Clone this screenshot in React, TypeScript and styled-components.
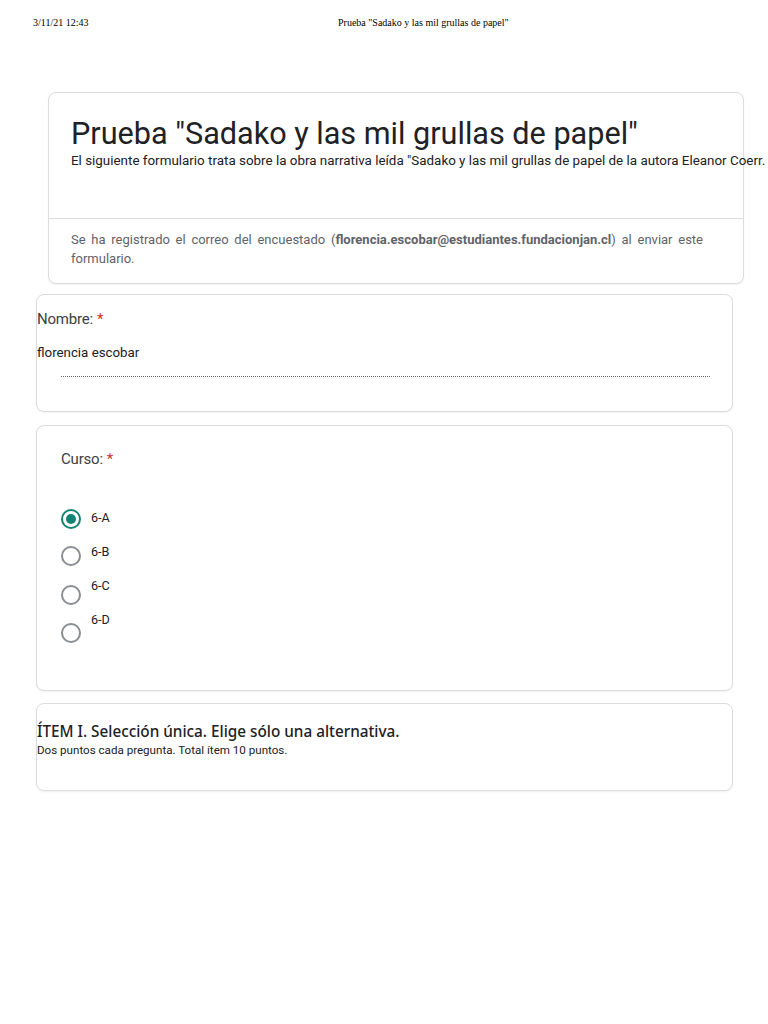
import styled, { createGlobalStyle } from "styled-components";

const GlobalStyle = createGlobalStyle`
  body {
    margin: 0;
    background: #fff;
    font-family: Roboto, "Liberation Sans", Arial, sans-serif;
    color: #202124;
  }
`;

const Page = styled.div`
  width: 768px;
  height: 1024px;
  overflow: hidden;
`;

const PrintHeader = styled.div`
  display: flex;
  align-items: baseline;
  padding: 17px 0 0 33px;
  height: 14px;
  font-family: "Liberation Serif", "Times New Roman", serif;
  font-size: 10px;
  color: #000;
`;

const PrintDate = styled.span`
  width: 305px;
`;

const PrintTitle = styled.span``;

const Column = styled.div`
  display: flex;
  flex-direction: column;
  padding-top: 61px;
`;

const Card = styled.div<{ $left: number; $width: number; $gap: number }>`
  margin-left: ${(p) => p.$left}px;
  margin-top: ${(p) => p.$gap}px;
  width: ${(p) => p.$width}px;
  box-sizing: border-box;
  background: #fff;
  border: 1px solid #dadce0;
  border-radius: 8px;
  box-shadow: 0 1px 2px rgba(0, 0, 0, 0.06);
`;

const HeaderTop = styled.div`
  padding: 22px 0 0 22px;
  height: 126px;
  box-sizing: border-box;
  border-bottom: 1px solid #dadce0;
`;

const FormTitle = styled.h1`
  margin: 0;
  font-size: 30.6px;
  font-weight: 400;
  line-height: 37px;
  color: #202124;
  white-space: nowrap;
`;

const FormDescription = styled.p`
  margin: 0;
  font-size: 13.4px;
  line-height: 17px;
  color: #202124;
  white-space: nowrap;
`;

const HeaderBottom = styled.div`
  padding: 11px 40px 15px 22px;
  font-size: 13px;
  line-height: 19px;
  color: #5f6368;
  text-align: justify;
`;

const Strong = styled.strong`
  font-weight: 700;
`;

const QuestionLabel = styled.div`
  font-size: 15px;
  line-height: 20px;
  color: #3c4043;
  letter-spacing: -0.2px;
`;

const Required = styled.span`
  color: #d93025;
  margin-left: 4px;
`;

const NameCard = styled.div`
  padding: 14px 0 0;
  height: 116px;
  box-sizing: border-box;
`;

const Answer = styled.div`
  margin-top: 16px;
  font-size: 13.3px;
  line-height: 16px;
  color: #202124;
`;

const DottedLine = styled.div`
  margin: 15px 0 0 24px;
  width: 649px;
  border-bottom: 1px dotted #5f6368;
`;

const CourseCard = styled.div`
  padding: 23px 24px 0;
  height: 264px;
  box-sizing: border-box;
`;

const Options = styled.div`
  display: flex;
  flex-direction: column;
  margin-top: 40px;
  gap: 14px;
`;

const Option = styled.div`
  display: flex;
  align-items: flex-start;
  height: 20px;
  gap: 10px;
`;

const Radio = styled.span<{ $checked?: boolean; $drop: number }>`
  position: relative;
  top: ${(p) => p.$drop}px;
  flex: none;
  width: 20px;
  height: 20px;
  box-sizing: border-box;
  border-radius: 50%;
  border: 2px solid ${(p) => (p.$checked ? "#128474" : "#8a8d91")};
  display: flex;
  align-items: center;
  justify-content: center;

  &::after {
    content: "";
    display: ${(p) => (p.$checked ? "block" : "none")};
    width: 10px;
    height: 10px;
    border-radius: 50%;
    background: #128474;
  }
`;

const OptionText = styled.span`
  font-size: 12.6px;
  line-height: 20px;
  color: #202124;
  margin-top: -1px;
`;

const SectionCard = styled.div`
  padding: 17px 0 0;
  height: 86px;
  box-sizing: border-box;
`;

const SectionTitle = styled.div`
  font-family: "Noto Sans", "Open Sans", sans-serif;
  font-size: 15.3px;
  font-weight: 500;
  line-height: 20px;
  color: #202124;
`;

const SectionText = styled.div`
  margin-top: 2px;
  font-size: 11.6px;
  line-height: 14px;
  color: #202124;
`;

const courses = [
  { label: "6-A", checked: true, drop: 0 },
  { label: "6-B", checked: false, drop: 3 },
  { label: "6-C", checked: false, drop: 8 },
  { label: "6-D", checked: false, drop: 12 },
];

export default function App() {
  return (
    <Page>
      <GlobalStyle />
      <PrintHeader>
        <PrintDate>3/11/21 12:43</PrintDate>
        <PrintTitle>Prueba "Sadako y las mil grullas de papel"</PrintTitle>
      </PrintHeader>
      <Column>
        <Card $left={48} $width={696} $gap={0}>
          <HeaderTop>
            <FormTitle>Prueba "Sadako y las mil grullas de papel"</FormTitle>
            <FormDescription>
              El siguiente formulario trata sobre la obra narrativa leída "Sadako y las mil grullas de papel de la autora Eleanor Coerr.
            </FormDescription>
          </HeaderTop>
          <HeaderBottom>
            Se ha registrado el correo del encuestado (<Strong>florencia.escobar@estudiantes.fundacionjan.cl</Strong>) al enviar este formulario.
          </HeaderBottom>
        </Card>
        <Card $left={36} $width={697} $gap={10}>
          <NameCard>
            <QuestionLabel>
              Nombre:<Required>*</Required>
            </QuestionLabel>
            <Answer>florencia escobar</Answer>
            <DottedLine />
          </NameCard>
        </Card>
        <Card $left={36} $width={697} $gap={13}>
          <CourseCard>
            <QuestionLabel>
              Curso:<Required>*</Required>
            </QuestionLabel>
            <Options>
              {courses.map((c) => (
                <Option key={c.label}>
                  <Radio $checked={c.checked} $drop={c.drop} />
                  <OptionText>{c.label}</OptionText>
                </Option>
              ))}
            </Options>
          </CourseCard>
        </Card>
        <Card $left={36} $width={697} $gap={12}>
          <SectionCard>
            <SectionTitle>ÍTEM I. Selección única. Elige sólo una alternativa.</SectionTitle>
            <SectionText>Dos puntos cada pregunta. Total ítem 10 puntos.</SectionText>
          </SectionCard>
        </Card>
      </Column>
    </Page>
  );
}
